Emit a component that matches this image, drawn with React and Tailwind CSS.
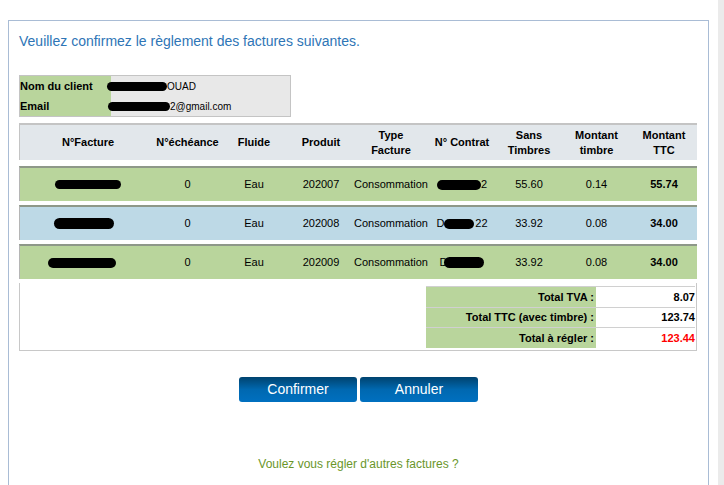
const cols =
  "grid grid-cols-[136px_63px_70px_64px_76px_66px_68px_67px_68px] items-center text-center";

function Blot({ className = "" }) {
  return <span className={`inline-block rounded-full bg-black align-middle ${className}`} />;
}

const rows = [
  {
    bg: "bg-[#b9d59c]",
    facture: <Blot className="w-[66px] h-[9px]" />,
    produit: "202007",
    contrat: (
      <span className="flex items-center justify-center">
        <Blot className="w-[44px] h-[10px]" />
        <span>2</span>
      </span>
    ),
    sans: "55.60",
    timbre: "0.14",
    ttc: "55.74",
  },
  {
    bg: "bg-[#bdd9e6]",
    facture: <Blot className="w-[60px] h-[11px] ml-[-8px]" />,
    produit: "202008",
    contrat: (
      <span className="flex items-center justify-center">
        <span>D</span>
        <Blot className="w-[30px] h-[10px] mr-[1px]" />
        <span>22</span>
      </span>
    ),
    sans: "33.92",
    timbre: "0.08",
    ttc: "34.00",
  },
  {
    bg: "bg-[#b9d59c]",
    facture: <Blot className="w-[68px] h-[10px] ml-[-12px]" />,
    produit: "202009",
    contrat: (
      <span className="flex items-center justify-center">
        <span>D</span>
        <Blot className="w-[40px] h-[11px] ml-[-3px]" />
      </span>
    ),
    sans: "33.92",
    timbre: "0.08",
    ttc: "34.00",
  },
];

export default function App() {
  return (
    <div className="h-[485px] w-full overflow-hidden bg-white flex font-['Liberation_Sans',Arial,sans-serif] text-black">
      <div className="pl-[8px] pt-[20px]">
        <div className="w-[701px] h-[480px] border border-b-0 border-[#a9bcd5] pl-[10px] pt-[12px]">
          {/* Titre */}
          <h1 className="text-[14px] leading-[16px] text-[#2e75b6]">
            Veuillez confirmez le règlement des factures suivantes.
          </h1>

          {/* Infos client */}
          <div className="mt-[26px] w-[272px] border border-[#c4c4c4] bg-[#e8e8e8] text-[11px]">
            <div className="flex h-[20px] items-center">
              <div className="w-[91px] h-full flex items-center bg-[#b9d59c] font-bold">Nom du client</div>
              <div className="flex items-center">
                <Blot className="w-[60px] h-[9px] ml-[-4px]" />
                <span className="text-[10px]">OUAD</span>
              </div>
            </div>
            <div className="flex h-[20px] items-center">
              <div className="w-[91px] h-full flex items-center bg-[#b9d59c] font-bold">Email</div>
              <div className="flex items-center">
                <Blot className="w-[62px] h-[9px] ml-[-3px]" />
                <span className="text-[10px]">2@gmail.com</span>
              </div>
            </div>
          </div>

          {/* Factures */}
          <div className="mt-[6px] w-[678px] text-[11px]">
            <div className={`${cols} h-[37px] bg-[#e2e7eb] border-t-2 border-l border-[#c4c4c4] font-bold leading-[15px]`}>
              <div>N°Facture</div>
              <div>N°échéance</div>
              <div>Fluide</div>
              <div>Produit</div>
              <div>Type<br />Facture</div>
              <div>N° Contrat</div>
              <div>Sans<br />Timbres</div>
              <div>Montant<br />timbre</div>
              <div>Montant<br />TTC</div>
            </div>

            <div className="mt-[6px] flex flex-col gap-[4px]">
              {rows.map((r, i) => (
                <div
                  key={i}
                  className={`${cols} h-[35px] ${r.bg} border-t-2 border-t-[#8e9889] border-l border-l-[#b5b5b5]`}
                >
                  <div className="flex justify-center">{r.facture}</div>
                  <div>0</div>
                  <div>Eau</div>
                  <div>{r.produit}</div>
                  <div>Consommation</div>
                  <div>{r.contrat}</div>
                  <div>{r.sans}</div>
                  <div>{r.timbre}</div>
                  <div className="font-bold">{r.ttc}</div>
                </div>
              ))}
            </div>

            {/* Totaux */}
            <div className="mt-[4px] h-[68px] border border-t-0 border-[#c8c8c8] flex justify-end items-start pt-[3px] pr-[1px]">
              <div className="w-[269px] font-bold border-t border-[#d0d0d0]">
                <div className="flex h-[20px]">
                  <div className="w-[170px] bg-[#b9d59c] flex items-center justify-end pr-[2px]">Total TVA :</div>
                  <div className="flex-1 bg-white flex items-center justify-end">8.07</div>
                </div>
                <div className="flex h-[20px] border-t border-[#d0d0d0]">
                  <div className="w-[170px] bg-[#b9d59c] flex items-center justify-end pr-[2px]">Total TTC (avec timbre) :</div>
                  <div className="flex-1 bg-white flex items-center justify-end">123.74</div>
                </div>
                <div className="flex h-[21px] border-t border-[#d0d0d0]">
                  <div className="w-[170px] bg-[#b9d59c] flex items-center justify-end pr-[2px]">Total à régler :</div>
                  <div className="flex-1 bg-white flex items-center justify-end text-[#ff0000]">123.44</div>
                </div>
              </div>
            </div>
          </div>

          {/* Boutons */}
          <div className="mt-[26px] pr-[10px] flex justify-center gap-[3px]">
            <button className="w-[118px] h-[25px] rounded-[3px] bg-gradient-to-b from-[#00436f] via-[#0068b0] to-[#0070c0] text-white text-[14px]">
              Confirmer
            </button>
            <button className="w-[118px] h-[25px] rounded-[3px] bg-gradient-to-b from-[#00436f] via-[#0068b0] to-[#0070c0] text-white text-[14px]">
              Annuler
            </button>
          </div>

          {/* Lien */}
          <p className="mt-[53px] pr-[10px] text-center text-[12px] text-[#6a962a]">
            Voulez vous régler d'autres factures ?
          </p>
        </div>
      </div>
      <div className="ml-auto w-[6px] h-full bg-[#ebebeb]" />
    </div>
  );
}
